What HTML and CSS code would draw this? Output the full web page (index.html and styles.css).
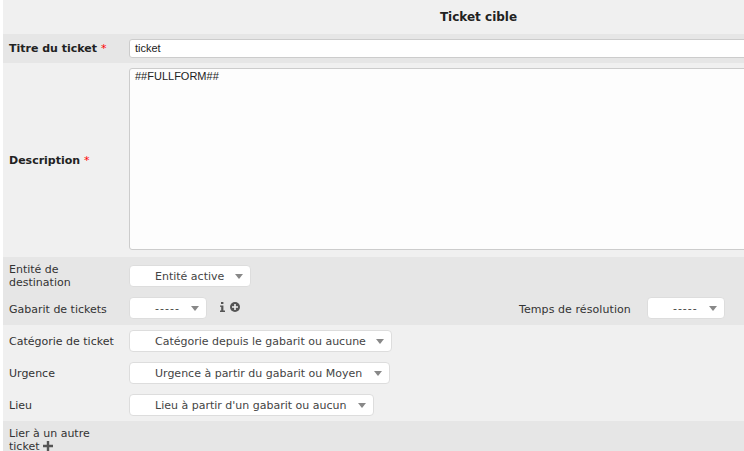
FILE: index.html
```html
<!DOCTYPE html>
<html lang="en">
<head>
    <meta charset="UTF-8">
    <title>Ticket cible</title>
    <link rel="stylesheet" href="styles.css">
</head>
<body>
    <div class="form">
        <div class="form-head">Ticket cible</div>

        <div class="row dark row-title">
            <div class="label strong">Titre du ticket <span class="req">*</span></div>
            <div class="text-input">ticket</div>
        </div>

        <div class="row light row-desc">
            <div class="label strong">Description <span class="req">*</span></div>
            <div class="text-area">##FULLFORM##</div>
        </div>

        <div class="group dark group-entity">
            <div class="row row-entity">
                <div class="label">Entité de destination</div>
                <div class="select select-entity"><span>Entité active</span><i class="caret"></i></div>
            </div>
            <div class="row row-template">
                <div class="label">Gabarit de tickets</div>
                <div class="select select-short"><span class="dashes">-----</span><i class="caret"></i></div>
                <div class="icons">
                    <svg width="5" height="10" viewBox="0 0 5 10"><path d="M1 0h2.400v2H1zM0 3.400h3.400V8.600H5V10H0V8.600h1.200V4.800H0z" fill="#555"/></svg>
                    <svg width="10" height="10" viewBox="0 0 10 10"><circle cx="5" cy="5" r="5" fill="#555"/><path d="M4.200 2h1.600v2.200H8v1.600H5.800V8H4.200V5.800H2V4.200h2.200z" fill="#f0f0f0"/></svg>
                </div>
                <div class="label label-right">Temps de résolution</div>
                <div class="select select-short"><span class="dashes">-----</span><i class="caret"></i></div>
            </div>
        </div>

        <div class="group light group-fields">
            <div class="row row-field">
                <div class="label">Catégorie de ticket</div>
                <div class="select"><span>Catégorie depuis le gabarit ou aucune</span><i class="caret"></i></div>
            </div>
            <div class="row row-field">
                <div class="label">Urgence</div>
                <div class="select select-urgency"><span>Urgence à partir du gabarit ou Moyen</span><i class="caret"></i></div>
            </div>
            <div class="row row-field">
                <div class="label">Lieu</div>
                <div class="select select-place"><span>Lieu à partir d'un gabarit ou aucun</span><i class="caret"></i></div>
            </div>
        </div>

        <div class="row dark row-link">
            <div class="label">Lier à un autre ticket <svg class="plus" width="10" height="10" viewBox="0 0 10 10"><path d="M3.800 0h2.400v3.800H10v2.400H6.200V10H3.800V6.200H0V3.800h3.800z" fill="#555"/></svg></div>
        </div>
    </div>
</body>
</html>
```

FILE: styles.css
```css
* {
  box-sizing: border-box;
  margin: 0;
  padding: 0;
}

html, body {
  height: 451px;
  overflow: hidden;
  background-color: white;
}

body {
  font-family: "DejaVu Sans", Verdana, sans-serif;
  font-size: 11px;
  color: #333;
}

.form {
  margin-left: 3px;
  width: 741px;
}

.form-head {
  height: 34px;
  padding: 10px 0 0 210px;
  text-align: center;
  font-size: 12px;
  line-height: 14px;
  font-weight: bold;
  color: #222;
  background-color: #f0f0f0;
}

.dark {
  background-color: #e6e6e6;
}

.light {
  background-color: #f0f0f0;
}

.row {
  display: flex;
  align-items: center;
}

.label {
  width: 126px;
  flex: none;
  padding: 0 8px 0 6px;
  line-height: 13px;
}

.strong {
  font-weight: bold;
  color: #222;
  padding-right: 0;
}

.req {
  color: red;
  font-weight: normal;
}

.row-title {
  height: 29px;
}

.text-input, .text-area {
  flex: 1;
  margin-right: -4px;
  border: 1px solid #ccc;
  border-radius: 3px;
  font-family: "Liberation Sans", Arial, sans-serif;
  font-size: 11px;
  color: #222;
  padding-left: 5px;
}

.text-input {
  height: 19px;
  line-height: 16px;
  margin-top: -1px;
  background-color: white;
}

.row-desc {
  height: 194px;
}

.text-area {
  height: 182px;
  line-height: 12px;
  padding-top: 1px;
  background-color: #fdfdfd;
  margin-top: -3px;
}

.group-entity {
  height: 68px;
  padding-top: 6px;
}

.row-entity {
  height: 26px;
}

.row-template {
  height: 26px;
  margin-top: 6px;
}

.row-template .label {
  padding-top: 2px;
}

.select {
  display: flex;
  align-items: center;
  justify-content: space-between;
  gap: 10px;
  height: 22px;
  padding: 0 7px 0 25px;
  border: 1px solid #ddd;
  border-radius: 4px;
  background-color: white;
  color: #444;
  white-space: nowrap;
}

.dashes {
  letter-spacing: 1px;
}

.caret {
  width: 0;
  height: 0;
  border-left: 4.5px solid transparent;
  border-right: 4.5px solid transparent;
  border-top: 5px solid #888;
}

.select-entity {
  width: 122px;
}

.select-short {
  width: 78px;
}

.select-urgency {
  width: 261px;
}

.select-place {
  width: 245px;
}

.icons {
  display: flex;
  align-items: center;
  gap: 5px;
  flex: none;
  width: 108px;
  margin: 0 0 2px 13px;
}

.row-template .label-right {
  width: auto;
  padding: 2px 0 0;
  margin: 0 16px 0 191px;
  letter-spacing: 0.08px;
}

.group-fields {
  height: 96px;
  padding-top: 5px;
}

.row-field {
  height: 22px;
  margin-bottom: 10px;
}

.row-link {
  height: 30px;
  align-items: flex-start;
  padding-top: 6px;
}

.plus {
  vertical-align: -1px;
}
```
